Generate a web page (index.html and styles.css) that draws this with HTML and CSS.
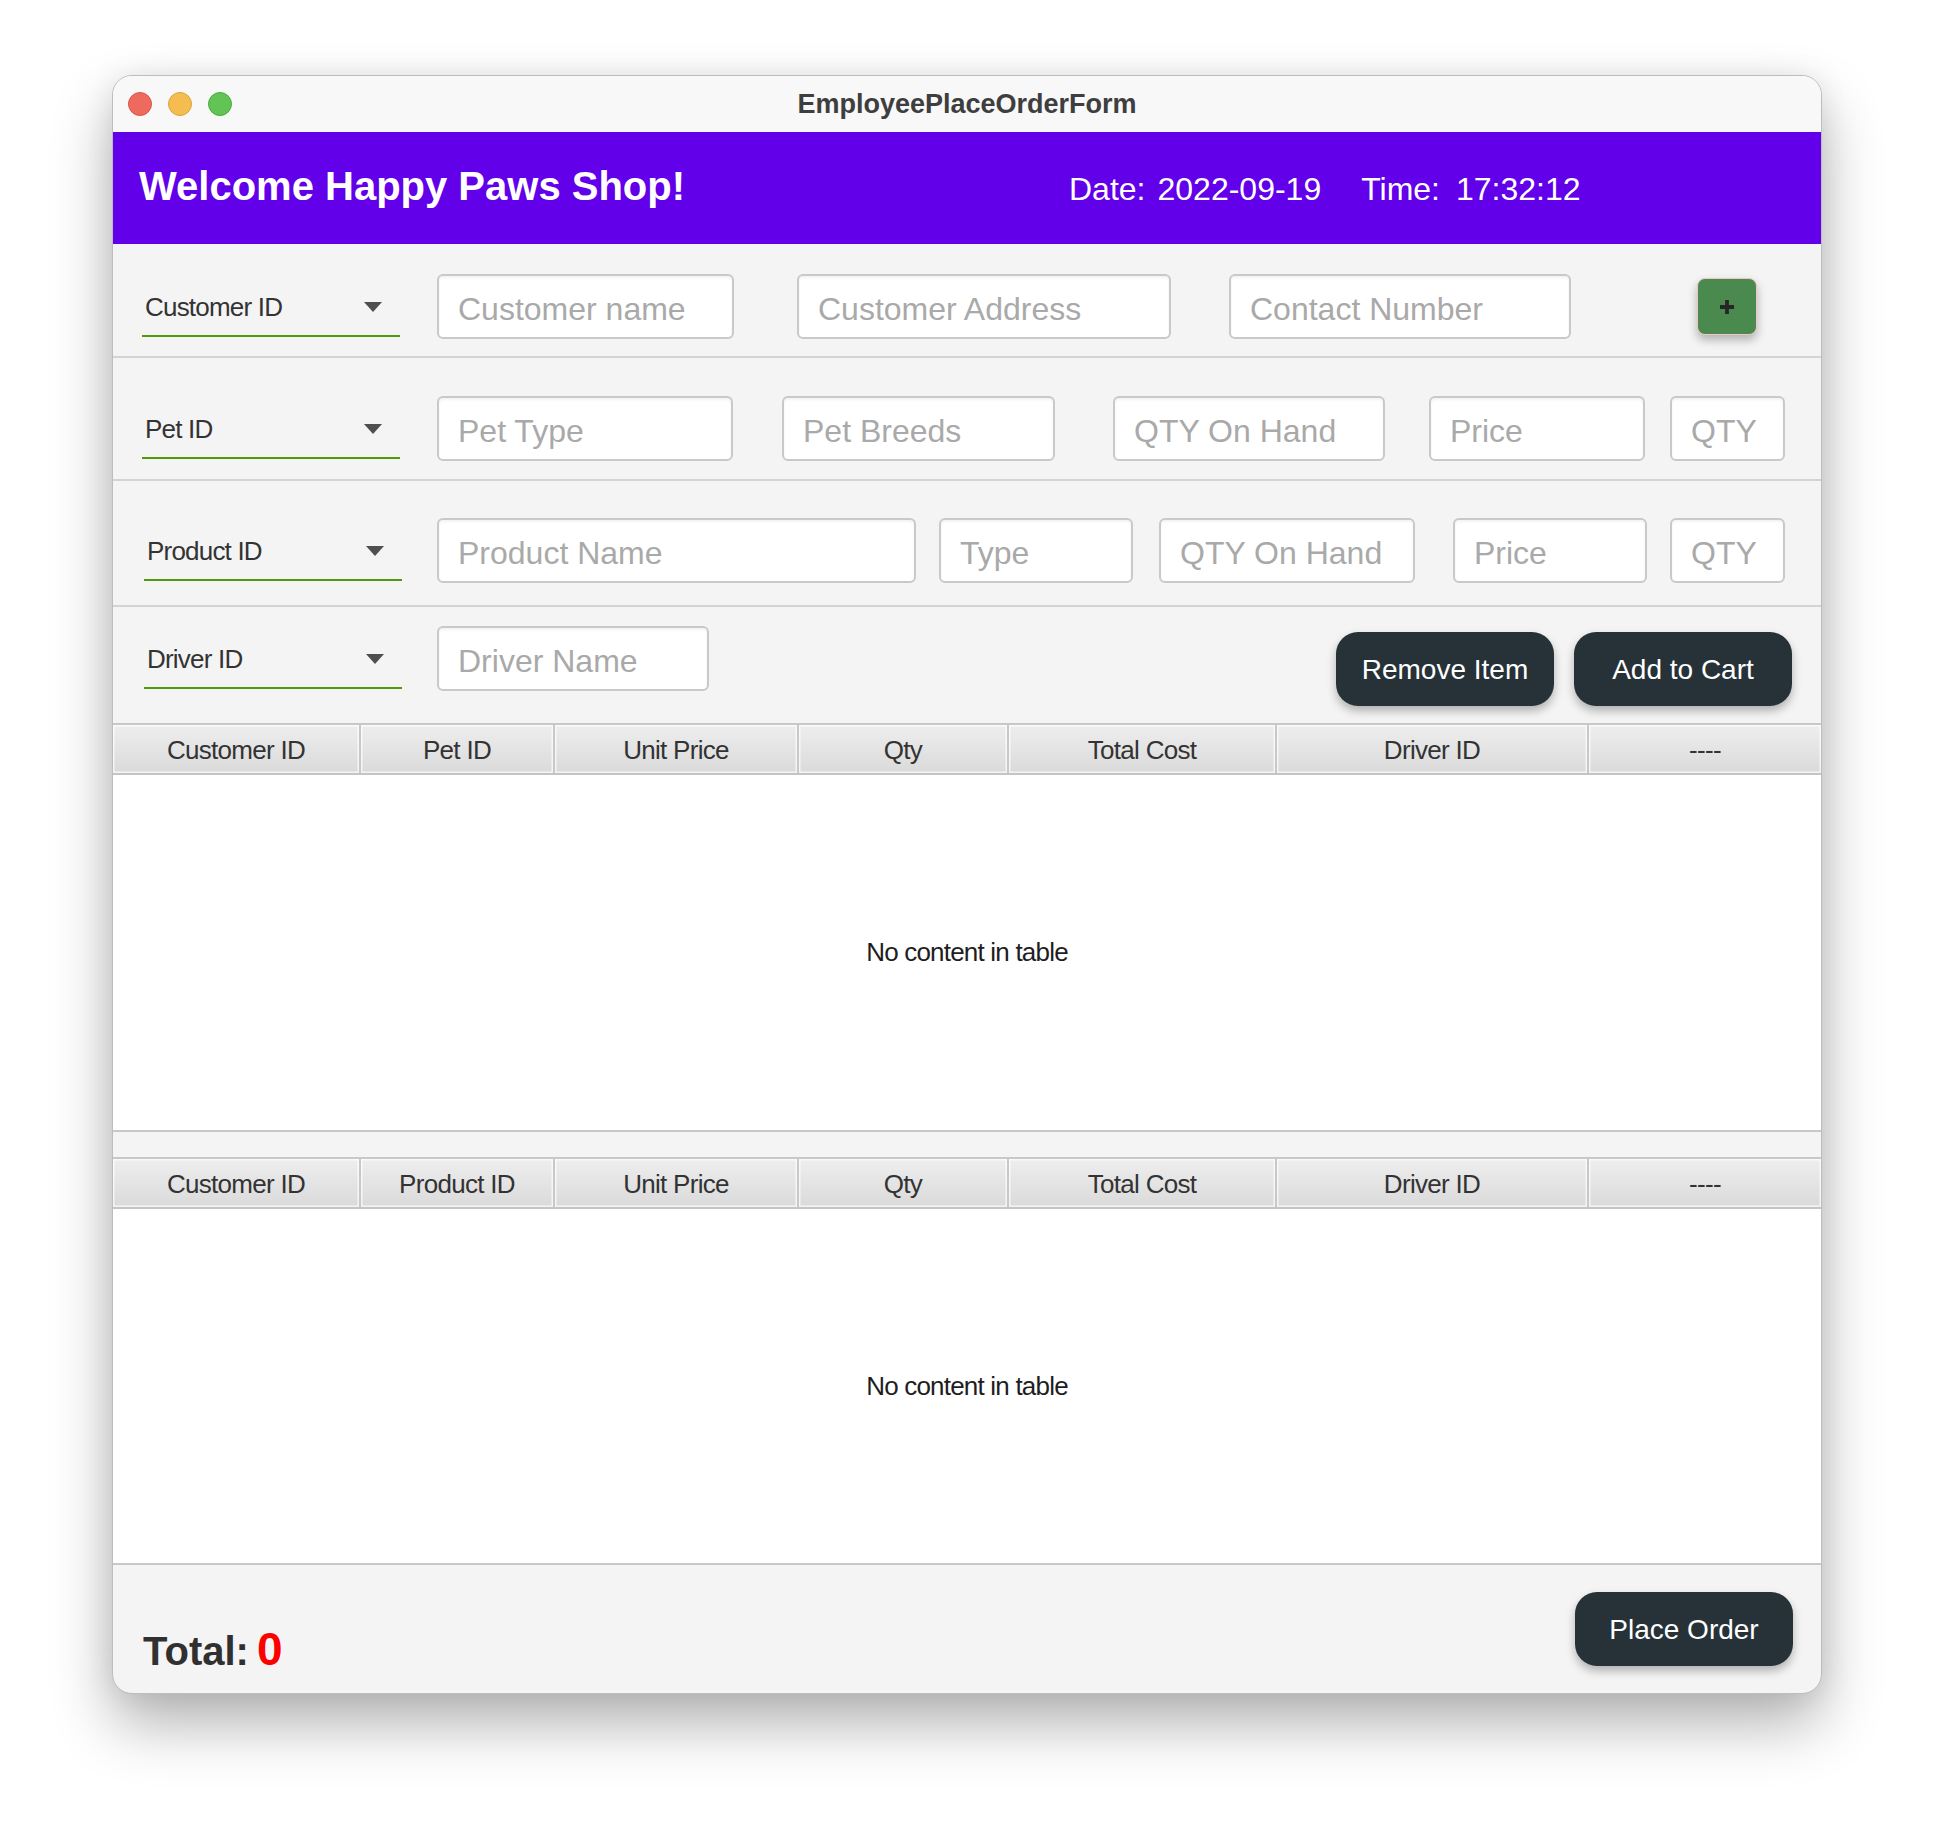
FILE: index.html
```html
<!DOCTYPE html>
<html lang="en">
<head>
<meta charset="utf-8">
<title>EmployeePlaceOrderForm</title>
<link rel="stylesheet" href="styles.css">
</head>
<body>
<div class="window">
  <div class="titlebar">
    <div class="lights">
      <span class="light red"></span>
      <span class="light yellow"></span>
      <span class="light green"></span>
    </div>
    <div class="title">EmployeePlaceOrderForm</div>
    <div></div>
  </div>

  <header class="app-header">
    <div class="welcome">Welcome Happy Paws Shop!</div>
    <div class="datetime">
      <span>Date:</span><span class="dt-date">2022-09-19</span><span class="dt-time-label">Time:</span><span class="dt-time">17:32:12</span>
    </div>
  </header>

  <div class="form-row row-customer">
    <div class="combo combo-a">
      <span class="combo-label">Customer ID</span>
      <svg class="combo-arrow" viewBox="0 0 18 10"><polygon points="0,0 18,0 9,10" fill="#4f4f4f"/></svg>
    </div>
    <input class="field f-cname" type="text" placeholder="Customer name">
    <input class="field f-caddr" type="text" placeholder="Customer Address">
    <input class="field f-contact" type="text" placeholder="Contact Number">
    <button class="btn-add" type="button" aria-label="Add customer">
      <svg width="16" height="16" viewBox="0 0 16 16"><path d="M8 1v14M1 8h14" stroke="#262626" stroke-width="3.8" fill="none"/></svg>
    </button>
  </div>

  <div class="form-row row-pet">
    <div class="combo combo-a">
      <span class="combo-label">Pet ID</span>
      <svg class="combo-arrow" viewBox="0 0 18 10"><polygon points="0,0 18,0 9,10" fill="#4f4f4f"/></svg>
    </div>
    <input class="field f-pettype" type="text" placeholder="Pet Type">
    <input class="field f-breeds" type="text" placeholder="Pet Breeds">
    <input class="field f-pqoh" type="text" placeholder="QTY On Hand">
    <input class="field f-pprice" type="text" placeholder="Price">
    <input class="field f-pqty" type="text" placeholder="QTY">
  </div>

  <div class="form-row row-product">
    <div class="combo combo-b">
      <span class="combo-label">Product ID</span>
      <svg class="combo-arrow" viewBox="0 0 18 10"><polygon points="0,0 18,0 9,10" fill="#4f4f4f"/></svg>
    </div>
    <input class="field f-pname" type="text" placeholder="Product Name">
    <input class="field f-type" type="text" placeholder="Type">
    <input class="field f-rqoh" type="text" placeholder="QTY On Hand">
    <input class="field f-rprice" type="text" placeholder="Price">
    <input class="field f-rqty" type="text" placeholder="QTY">
  </div>

  <div class="form-row row-driver">
    <div class="combo combo-b">
      <span class="combo-label">Driver ID</span>
      <svg class="combo-arrow" viewBox="0 0 18 10"><polygon points="0,0 18,0 9,10" fill="#4f4f4f"/></svg>
    </div>
    <input class="field f-dname" type="text" placeholder="Driver Name">
    <button class="btn-dark btn-remove" type="button">Remove Item</button>
    <button class="btn-dark btn-cart" type="button">Add to Cart</button>
  </div>

  <div class="table">
    <div class="thead">
      <div class="th">Customer ID</div>
      <div class="th">Pet ID</div>
      <div class="th">Unit Price</div>
      <div class="th">Qty</div>
      <div class="th">Total Cost</div>
      <div class="th">Driver ID</div>
      <div class="th">----</div>
    </div>
    <div class="tbody tbody-1">No content in table</div>
  </div>

  <div class="table table-2">
    <div class="thead">
      <div class="th">Customer ID</div>
      <div class="th">Product ID</div>
      <div class="th">Unit Price</div>
      <div class="th">Qty</div>
      <div class="th">Total Cost</div>
      <div class="th">Driver ID</div>
      <div class="th">----</div>
    </div>
    <div class="tbody tbody-2">No content in table</div>
  </div>

  <footer class="footer">
    <div class="total">Total:<span class="zero">0</span></div>
    <button class="btn-dark btn-order" type="button">Place Order</button>
  </footer>
</div>
</body>
</html>
```

FILE: styles.css
```css
* {
  box-sizing: border-box;
}

html,
body {
  margin: 0;
}

body {
  width: 1934px;
  height: 1842px;
  overflow: hidden;
  background: #ffffff;
  padding: 75px 0 0 112px;
  font-family: "Liberation Sans", Arial, sans-serif;
}

.window {
  width: 1710px;
  height: 1619px;
  border: 1px solid #bdbdbd;
  border-radius: 20px;
  overflow: hidden;
  background: #f4f4f4;
  display: flex;
  flex-direction: column;
  box-shadow: 0 30px 60px rgba(0, 0, 0, 0.30), 0 0 28px rgba(0, 0, 0, 0.08);
}

/* title bar */
.titlebar {
  height: 56px;
  flex: none;
  background: #f8f8f8;
  display: grid;
  grid-template-columns: 1fr auto 1fr;
  align-items: center;
}

.lights {
  display: flex;
  gap: 16px;
  padding-left: 15px;
}

.light {
  width: 24px;
  height: 24px;
  border-radius: 50%;
}

.red {
  background: #ee6a5e;
  border: 1px solid #d8554a;
}

.yellow {
  background: #f5bd4f;
  border: 1px solid #daa33a;
}

.green {
  background: #61c454;
  border: 1px solid #4ea941;
}

.title {
  font-weight: bold;
  font-size: 27px;
  color: #3e3e3e;
}

/* purple header */
.app-header {
  height: 112px;
  flex: none;
  background: #6200ea;
  color: #ffffff;
  display: grid;
  grid-template-columns: 930px auto;
  align-items: baseline;
  padding: 32px 0 0 26px;
}

.welcome {
  font-size: 40px;
  font-weight: bold;
}

.datetime {
  font-size: 32px;
}

.dt-date {
  margin-left: 12px;
}

.dt-time-label {
  margin-left: 40px;
}

.dt-time {
  margin-left: 16px;
}

/* form rows */
.form-row {
  flex: none;
  display: flex;
  align-items: flex-start;
  border-bottom: 2px solid #d3d3d3;
}

.row-customer {
  height: 114px;
  padding-top: 30px;
}

.row-pet {
  height: 123px;
  padding-top: 38px;
}

.row-product {
  height: 126px;
  padding-top: 37px;
}

.row-driver {
  height: 116px;
  padding-top: 19px;
  border-bottom: none;
}

.combo {
  flex: none;
  width: 258px;
  height: 63px;
  border-bottom: 2px solid #4f9a08;
  display: flex;
  align-items: center;
  justify-content: space-between;
  padding: 5px 18px 0 3px;
}

.combo-a {
  margin-left: 29px;
}

.combo-b {
  margin-left: 31px;
}

.combo-label {
  font-size: 26px;
  letter-spacing: -0.8px;
  color: #333333;
}

.combo-arrow {
  width: 18px;
  height: 10px;
}

.field {
  flex: none;
  height: 65px;
  border: 2px solid #c9c9c9;
  border-radius: 6px;
  background: #ffffff;
  padding: 6px 0 0 19px;
  font-family: "Liberation Sans", Arial, sans-serif;
  font-size: 32px;
  color: #333333;
  outline: none;
  box-shadow: inset 0 2px 3px rgba(0, 0, 0, 0.05);
}

.field::placeholder {
  color: #a9a9a9;
}

.f-cname { width: 297px; margin-left: 37px; }
.f-caddr { width: 374px; margin-left: 63px; }
.f-contact { width: 342px; margin-left: 58px; }

.f-pettype { width: 296px; margin-left: 37px; }
.f-breeds { width: 273px; margin-left: 49px; }
.f-pqoh { width: 272px; margin-left: 58px; }
.f-pprice { width: 216px; margin-left: 44px; }
.f-pqty { width: 115px; margin-left: 25px; }

.f-pname { width: 479px; margin-left: 35px; }
.f-type { width: 194px; margin-left: 23px; }
.f-rqoh { width: 256px; margin-left: 26px; }
.f-rprice { width: 194px; margin-left: 38px; }
.f-rqty { width: 115px; margin-left: 23px; }

.f-dname { width: 272px; margin-left: 35px; }

.btn-add {
  flex: none;
  width: 60px;
  height: 57px;
  margin: 4px 0 0 126px;
  padding: 0;
  background: #4b8a4f;
  border: 1.5px solid #f0c6c6;
  border-radius: 8px;
  display: flex;
  align-items: center;
  justify-content: center;
  box-shadow: 0 5px 10px rgba(0, 0, 0, 0.28);
}

.btn-dark {
  flex: none;
  width: 218px;
  height: 74px;
  padding: 2px 0 0;
  background: #263238;
  color: #ffffff;
  border: none;
  border-radius: 22px;
  font-family: "Liberation Sans", Arial, sans-serif;
  font-size: 28px;
  box-shadow: 0 5px 10px rgba(0, 0, 0, 0.28);
}

.btn-remove {
  margin: 6px 0 0 auto;
}

.btn-cart {
  margin: 6px 29px 0 20px;
}

/* tables */
.table {
  flex: none;
}

.table-2 {
  margin-top: 25px;
}

.thead {
  height: 52px;
  display: grid;
  grid-template-columns: 248px 194px 244px 210px 268px 312px 232px;
  border-top: 2px solid #c8c8c8;
  border-bottom: 2px solid #c4c4c4;
}

.th {
  display: flex;
  align-items: center;
  justify-content: center;
  padding-top: 2px;
  border-right: 2px solid #c8c8c8;
  background: linear-gradient(#eeeeee, #dadada);
  box-shadow: inset 0 0 0 1.5px rgba(255, 255, 255, 0.7);
  font-size: 26px;
  letter-spacing: -0.7px;
  color: #333333;
}

.th:last-child {
  border-right: none;
}

.tbody {
  background: #ffffff;
  border-bottom: 2px solid #c8c8c8;
  display: flex;
  align-items: center;
  justify-content: center;
  font-size: 26px;
  letter-spacing: -0.8px;
  color: #1e1e1e;
}

.tbody-1 {
  height: 357px;
}

.tbody-2 {
  height: 356px;
}

/* footer */
.footer {
  flex: none;
  height: 128px;
  display: flex;
  justify-content: space-between;
  align-items: flex-start;
  padding: 27px 28px 0 30px;
}

.total {
  margin-top: 34px;
  font-size: 40px;
  font-weight: bold;
  line-height: 1;
  color: #303030;
}

.zero {
  margin-left: 8px;
  font-size: 46px;
  color: #ff0000;
}
```
